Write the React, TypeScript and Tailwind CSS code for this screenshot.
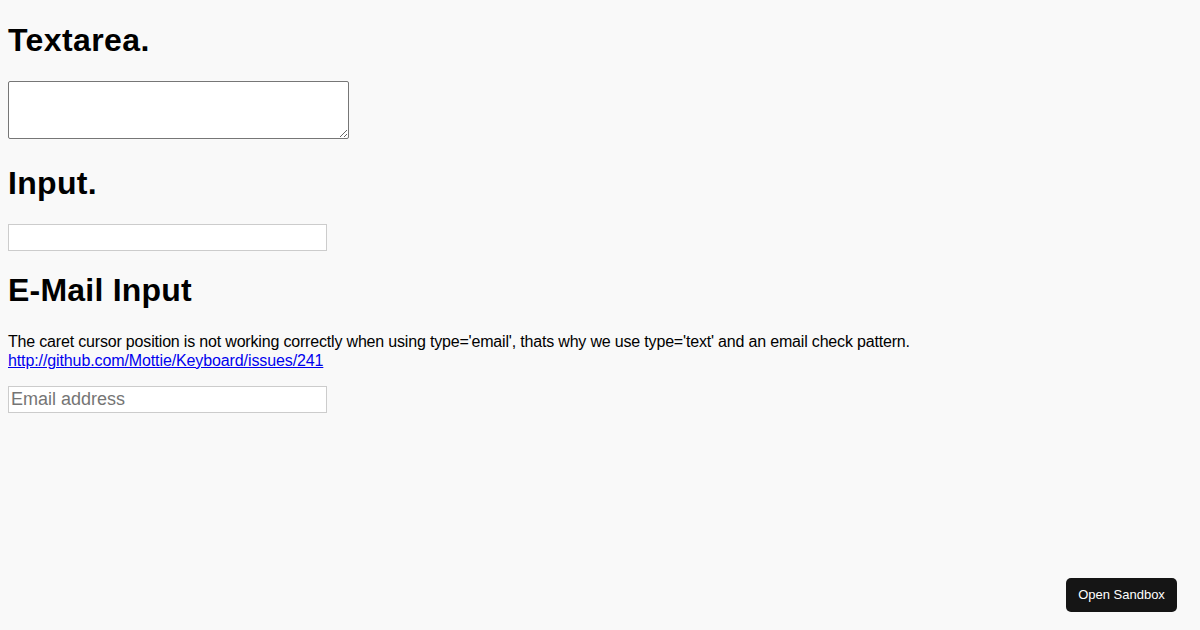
export default function App() {
  return (
    <div
      className="min-h-[630px] w-full bg-[#f9f9f9] px-2 pt-2 pb-2 text-black"
      style={{ fontFamily: '"Liberation Sans", Arial, sans-serif' }}
    >
      <h1 className="mt-[14px] text-[32px] font-bold leading-[37px] tracking-[0.4px]">Textarea.</h1>
      <textarea className="mt-[22px] block h-[58px] w-[341px] resize rounded-[2px] border border-[#767676] bg-white px-[2px] py-[2px] text-[13px] outline-none" />

      <h1 className="mt-[26px] text-[32px] font-bold leading-[37px] tracking-[0.3px]">Input.</h1>
      <input
        type="text"
        className="mt-[22px] block h-[27px] w-[319px] border border-[#cccccc] bg-white px-[2px] text-[18px] outline-none"
      />

      <h1 className="mt-[21px] text-[32px] font-bold leading-[37px] tracking-[0.22px]">E-Mail Input</h1>
      <p className="mt-[23px] text-[16px] leading-[19px]">
        <span className="tracking-[-0.18px]">
          The caret cursor position is not working correctly when using type='email', thats why we use
          type='text' and an email check pattern.
        </span>
        <br />
        <a href="#" className="tracking-[-0.11px] text-[#0000ee] underline">
          http://github.com/Mottie/Keyboard/issues/241
        </a>
      </p>
      <input
        type="text"
        placeholder="Email address"
        className="mt-[16px] block h-[27px] w-[319px] border border-[#cccccc] bg-white px-[2px] text-[18px] outline-none placeholder:text-[#757575]"
      />

      <button className="fixed bottom-[18px] right-[23px] h-[34px] w-[111px] rounded-[5px] bg-[#151515] text-[13px] text-white">
        Open Sandbox
      </button>
    </div>
  );
}
